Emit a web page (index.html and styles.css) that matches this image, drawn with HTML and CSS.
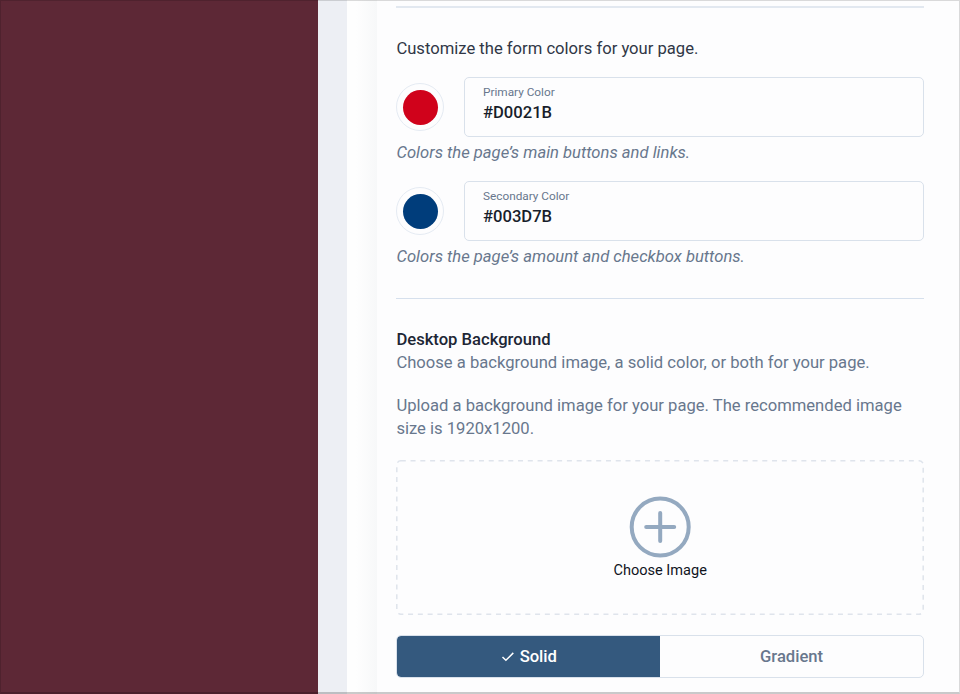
FILE: index.html
```html
<!DOCTYPE html>
<html lang="en">
<head>
    <meta charset="UTF-8">
    <meta name="viewport" content="width=device-width, initial-scale=1.0">
    <title>Page Settings</title>
    <link rel="stylesheet" href="styles.css">
</head>
<body>

<div class="app">
    <div class="preview"></div>
    <div class="gutter"></div>
    <div class="margin"></div>

    <main class="panel">
        <hr class="divider top">

        <p class="intro"><span>Customize the form colors for your page.</span></p>

        <div class="color-row">
            <div class="swatch"><span class="dot primary"></span></div>
            <label class="field">
                <span class="field-label">Primary Color</span>
                <span class="field-value">#D0021B</span>
            </label>
        </div>
        <p class="hint"><span>Colors the page’s main buttons and links.</span></p>

        <div class="color-row">
            <div class="swatch"><span class="dot secondary"></span></div>
            <label class="field">
                <span class="field-label">Secondary Color</span>
                <span class="field-value">#003D7B</span>
            </label>
        </div>
        <p class="hint"><span>Colors the page’s amount and checkbox buttons.</span></p>

        <hr class="divider">

        <h2><span>Desktop Background</span></h2>
        <p class="text"><span>Choose a background image, a solid color, or both for your page.</span></p>
        <p class="text upload-text"><span>Upload a background image for your page. The recommended image size is 1920x1200.</span></p>

        <div class="dropzone">
            <svg class="dash" width="528" height="155" viewBox="0 0 528 155" fill="none">
                <rect x="0.8" y="0.8" width="526.4" height="153.4" rx="4" stroke="#dfe4ec" stroke-width="1.5" stroke-dasharray="5 4.77" />
            </svg>
            <svg class="plus" width="62" height="62" viewBox="0 0 62 62" fill="none" stroke="#94a9c0" stroke-width="4">
                <circle cx="31.2" cy="31" r="28.5" />
                <path d="M31.2 17v28M17.2 31h28" stroke-linecap="round" />
            </svg>
            <span class="choose">Choose Image</span>
        </div>

        <div class="tabs">
            <div class="tab active">
                <svg width="14" height="12" viewBox="0 0 14 12" fill="none" stroke="#fff" stroke-width="1.5">
                    <path d="M1.5 6l3.4 3.3L12.3 1.9" />
                </svg>
                <span>Solid</span>
            </div>
            <div class="tab"><span>Gradient</span></div>
        </div>
    </main>
</div>

</body>
</html>
```

FILE: styles.css
```css
body {
    font-family: Roboto, sans-serif;
    font-size: 16.63px;
    line-height: 23px;
    color: #303746;
    margin: 0;
    overflow: hidden;
}
p, h2 {
    margin: 0;
}
.app {
    display: flex;
    height: 694px;
    background: #fdfdfe;
}
/* Thin frame over the whole window */
.app::after {
    content: "";
    position: absolute;
    inset: 0;
    border: 1px solid rgba(0, 0, 0, 0.14);
    border-bottom: 2px solid rgba(0, 0, 0, 0.2);
    pointer-events: none;
}
.preview {
    width: 318px;
    background: #5d2836;
}
.gutter {
    width: 29px;
    background: #edeff4;
}
.margin {
    width: 30px;
    background: linear-gradient(to right, #fefefe 30%, #f7f8f9);
}
.panel {
    width: 527.6px;
    padding: 6px 36px 0 19.4px;
    background: #fdfdfe;
}
.divider {
    height: 0;
    margin: 0;
    border: 0;
    border-top: 1px solid #d6e0ed;
}
.top {
    border-top: 2px solid #e2e8f0;
}
.intro {
    margin: 29px 0 17px;
}
.color-row {
    display: flex;
    align-items: center;
    gap: 20px;
}
.swatch {
    display: flex;
    align-items: center;
    justify-content: center;
    box-sizing: border-box;
    width: 48px;
    height: 48px;
    border: 1px solid #e5ebf3;
    border-radius: 50%;
}
.dot {
    width: 35px;
    height: 35px;
    border-radius: 50%;
}
.primary {
    background: #d0021b;
}
.secondary {
    background: #003d7b;
}
.field {
    display: flex;
    flex-direction: column;
    flex: 1;
    box-sizing: border-box;
    height: 60px;
    padding: 5px 17.6px;
    border: 1.5px solid #d9e1eb;
    border-radius: 5px;
}
.field-label {
    font-size: 11.8px;
    line-height: 19px;
    color: #68778d;
}
.field-value {
    font-weight: 500;
    line-height: 22px;
    color: #181e2b;
}
.hint {
    margin: 4px 0 17px;
    font-style: italic;
    color: #68778d;
}
.color-row + .hint + .divider {
    margin-top: 30px;
}
h2 {
    margin-top: 29px;
    font-size: 16.63px;
    font-weight: 500;
    color: #202635;
}
.text {
    color: #68778d;
}
.upload-text {
    margin: 20px 0;
}
.dropzone {
    position: relative;
    display: flex;
    flex-direction: column;
    align-items: center;
    box-sizing: border-box;
    height: 155px;
    padding-top: 35.5px;
}
.dash {
    position: absolute;
    inset: 0;
}
.choose {
    margin-top: 1.5px;
    font-size: 14.55px;
    color: #10141d;
}
.tabs {
    display: flex;
    box-sizing: border-box;
    height: 43px;
    margin-top: 20px;
    border: 1px solid #d9e1eb;
    border-radius: 5px;
    overflow: hidden;
}
.tab {
    display: flex;
    align-items: center;
    justify-content: center;
    gap: 5px;
    flex: 1;
    font-weight: 500;
    color: #68778d;
}
.active {
    color: #fff;
    background: #34597e;
    border-radius: 4px 0 0 4px;
}
```
